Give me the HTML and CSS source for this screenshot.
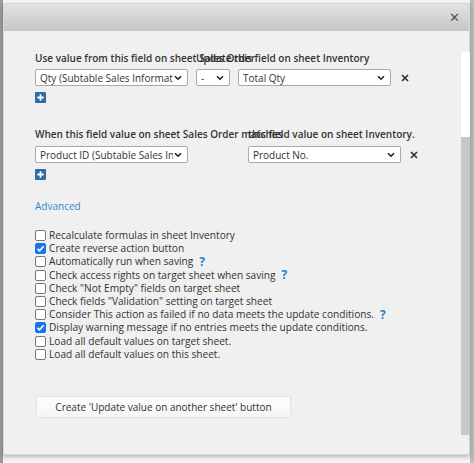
FILE: index.html
```html
<!DOCTYPE html>
<html>
<head>
<meta charset="utf-8">
<link rel="stylesheet" href="styles.css">
</head>
<body>
<div class="page">
  <div class="dialog">
    <div class="dlg-head">
      <span class="dlg-close">&#x2715;</span>
    </div>
    <div class="dlg-body">
      <div class="content">
        <div class="grid grid-a labels">
          <div class="lbl">Use value from this field on sheet Sales Order</div>
          <div class="lbl">Update this field on sheet Inventory</div>
        </div>
        <div class="grid grid-a">
          <div class="sel"><span class="sel-text">Qty (Subtable Sales Information)</span><svg class="chev" viewBox="0 0 8 6" width="8" height="6"><path d="M1 1.2 L4 4.2 L7 1.2" fill="none" stroke="#222" stroke-width="1.6"/></svg></div>
          <div class="sel"><span class="sel-text">-</span><svg class="chev" viewBox="0 0 8 6" width="8" height="6"><path d="M1 1.2 L4 4.2 L7 1.2" fill="none" stroke="#222" stroke-width="1.6"/></svg></div>
          <div class="sel"><span class="sel-text">Total Qty</span><svg class="chev" viewBox="0 0 8 6" width="8" height="6"><path d="M1 1.2 L4 4.2 L7 1.2" fill="none" stroke="#222" stroke-width="1.6"/></svg></div>
          <svg class="x" viewBox="0 0 8 8" width="8" height="8"><path d="M1 1 L7 7 M7 1 L1 7" stroke="#333" stroke-width="1.7"/></svg>
        </div>
        <div class="plus"><svg viewBox="0 0 11 11" width="11" height="11"><rect width="11" height="11" rx="1" fill="#2e6da4"/><path d="M5.5 2.3 V8.7 M2.3 5.5 H8.7" stroke="#fff" stroke-width="1.8"/></svg></div>

        <div class="grid grid-b labels second">
          <div class="lbl">When this field value on sheet Sales Order matches</div>
          <div class="lbl">this field value on sheet Inventory.</div>
        </div>
        <div class="grid grid-b">
          <div class="sel"><span class="sel-text">Product ID (Subtable Sales Information)</span><svg class="chev" viewBox="0 0 8 6" width="8" height="6"><path d="M1 1.2 L4 4.2 L7 1.2" fill="none" stroke="#222" stroke-width="1.6"/></svg></div>
          <div class="sel"><span class="sel-text">Product No.</span><svg class="chev" viewBox="0 0 8 6" width="8" height="6"><path d="M1 1.2 L4 4.2 L7 1.2" fill="none" stroke="#222" stroke-width="1.6"/></svg></div>
          <svg class="x" viewBox="0 0 8 8" width="8" height="8"><path d="M1 1 L7 7 M7 1 L1 7" stroke="#333" stroke-width="1.7"/></svg>
        </div>
        <div class="plus"><svg viewBox="0 0 11 11" width="11" height="11"><rect width="11" height="11" rx="1" fill="#2e6da4"/><path d="M5.5 2.3 V8.7 M2.3 5.5 H8.7" stroke="#fff" stroke-width="1.8"/></svg></div>

        <div class="advanced">Advanced</div>

        <ul class="checks">
          <li><span class="cb"></span>Recalculate formulas in sheet Inventory</li>
          <li><span class="cb on"><svg viewBox="0 0 11 11" width="11" height="11"><path d="M2.5 5.8 L4.6 7.8 L8.6 3.2" fill="none" stroke="#fff" stroke-width="1.7"/></svg></span>Create reverse action button</li>
          <li><span class="cb"></span>Automatically run when saving <span class="q">?</span></li>
          <li><span class="cb"></span>Check access rights on target sheet when saving <span class="q">?</span></li>
          <li><span class="cb"></span>Check "Not Empty" fields on target sheet</li>
          <li><span class="cb"></span>Check fields "Validation" setting on target sheet</li>
          <li><span class="cb"></span>Consider This action as failed if no data meets the update conditions. <span class="q">?</span></li>
          <li><span class="cb on"><svg viewBox="0 0 11 11" width="11" height="11"><path d="M2.5 5.8 L4.6 7.8 L8.6 3.2" fill="none" stroke="#fff" stroke-width="1.7"/></svg></span>Display warning message if no entries meets the update conditions.</li>
          <li><span class="cb"></span>Load all default values on target sheet.</li>
          <li><span class="cb"></span>Load all default values on this sheet.</li>
        </ul>

        <div class="btn">Create 'Update value on another sheet' button</div>
      </div>
      <div class="scrollbar">
        <div class="track"></div>
        <div class="thumb"></div>
      </div>
    </div>
  </div>
</div>
</body>
</html>
```
FILE: styles.css
```css
* { box-sizing: border-box; }
html, body { margin: 0; padding: 0; }
body {
  width: 474px;
  height: 463px;
  overflow: hidden;
  background: #ececec;
  font-family: "Open Sans", "Noto Sans", sans-serif;
  color: #333;
}
.page {
  width: 474px;
  height: 463px;
  padding: 3px 4px 0 3px;
  background: linear-gradient(to right, #9a9a9a 0, #9a9a9a 3px, #f4f4f4 3px, #f4f4f4 470px, #b7bcbc 470px);
}
.dialog {
  width: 467px;
  height: 452px;
  background: #f0f0f0;
  border: 1px solid #d6d6d6;
  box-shadow: 0 2px 4px rgba(0,0,0,0.25);
  display: flex;
  flex-direction: column;
}
.dlg-head {
  height: 27px;
  flex: none;
  background: linear-gradient(to bottom, #e2e2e2, #c6c6c6);
  display: flex;
  align-items: center;
  justify-content: flex-end;
  padding-right: 9px;
}
.dlg-close {
  font-size: 13px;
  color: #555;
  line-height: 1;
}
.dlg-body {
  flex: 1;
  display: flex;
  padding: 21px 22px 19px 31px;
}
.content {
  flex: 1;
  font-size: 10px;
}
.grid {
  display: grid;
  align-items: center;
}
.grid-a {
  grid-template-columns: 153px 34px 153px auto;
  column-gap: 8px;
}
.grid-a .x { margin-left: 2px; }
.grid-b {
  grid-template-columns: 153px 153px auto;
  column-gap: 60px;
}
.grid-b .x { margin-left: -51px; }
.labels {
  height: 13px;
  margin-bottom: 4px;
}
.labels.second { margin-top: 25px; margin-bottom: 5px; }
.lbl {
  white-space: nowrap;
  font-weight: 600;
  font-size: 10px;
  line-height: 13px;
  color: #333;
}
.sel {
  height: 17px;
  background: #fff;
  border: 1px solid #a9a9a9;
  border-radius: 2px;
  display: flex;
  align-items: center;
  padding: 0 5px 0 4px;
  overflow: hidden;
}
.sel-text {
  flex: 1;
  white-space: nowrap;
  overflow: hidden;
  font-size: 10px;
  color: #333;
}
.chev { flex: none; margin-left: 1px; }
.x { display: block; }
.plus {
  margin-top: 6px;
  height: 11px;
}
.plus svg { display: block; }
.advanced {
  margin-top: 20px;
  color: #3a87c8;
  font-size: 10px;
  line-height: 13px;
}
.checks {
  list-style: none;
  margin: 16px 0 0 0;
  padding: 0;
}
.checks li {
  display: flex;
  align-items: center;
  height: 13.2px;
  line-height: 13px;
  font-size: 10.15px;
  white-space: nowrap;
}
.cb {
  width: 11px;
  height: 11px;
  border: 1px solid #767676;
  border-radius: 2px;
  background: #fff;
  margin-right: 3px;
  flex: none;
  position: relative;
}
.cb.on {
  background: #1a73e8;
  border-color: #1a73e8;
}
.cb svg { position: absolute; left: -1px; top: -1px; }
.q {
  color: #2a7fc0;
  font-weight: 700;
  margin-left: 6px;
  font-size: 12px;
  line-height: 12px;
}
.btn {
  margin-top: 35px;
  margin-left: 1px;
  width: 255px;
  height: 22px;
  background: linear-gradient(to bottom, #fdfdfd, #f5f5f5);
  border: 1px solid #e2e2e2;
  border-radius: 2px;
  display: flex;
  align-items: center;
  justify-content: center;
  font-size: 10px;
  color: #333;
}
.scrollbar {
  width: 9px;
  flex: none;
  display: flex;
  flex-direction: column;
}
.track {
  height: 85px;
  background: #fff;
}
.thumb {
  flex: 1;
  background: #c8c8c8;
}
```
